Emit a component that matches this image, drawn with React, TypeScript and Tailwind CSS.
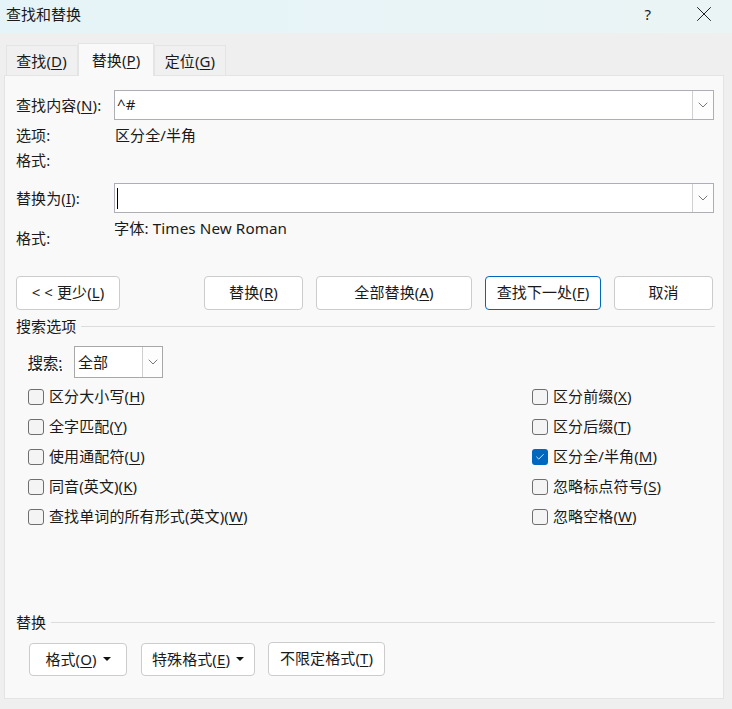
import React from "react";
import { Check, ChevronDown, X } from "lucide-react";

const font = "font-['Noto_Sans','Noto_Sans_CJK_SC',sans-serif]";

function Key({ k }: { k: string }) {
  return (
    <>
      (<span className="underline underline-offset-2">{k}</span>)
    </>
  );
}

function DropBtn({ w }: { w: string }) {
  return (
    <div className={`flex ${w} items-center justify-center border-l border-[#cfcfcf] bg-[#fdfdfd]`}>
      <ChevronDown className="h-4 w-4 text-[#555]" strokeWidth={1.2} />
    </div>
  );
}

function Combo({ children }: { children?: React.ReactNode }) {
  return (
    <div className="flex h-[30px] w-[600px] items-stretch border-[1.5px] border-[#aeaeb6] bg-white">
      <div className="flex flex-1 items-center pl-[1px]">{children}</div>
      <DropBtn w="w-[21px]" />
    </div>
  );
}

function Btn({ w, focus, tall, children }: { w: string; focus?: boolean; tall?: boolean; children: React.ReactNode }) {
  return (
    <div
      className={`flex items-center justify-center rounded-[4px] border bg-white pb-[2px] ${w} ${tall ? "h-[34px]" : "h-[33px]"} ${
        focus ? "border-[#0067c0]" : "border-[#cccccc]"
      }`}
    >
      {children}
    </div>
  );
}

function Caret() {
  return <span className="ml-[6px] inline-block border-x-[4px] border-t-[4px] border-x-transparent border-t-[#111]" />;
}

function Opt({ label, k, checked }: { label: string; k: string; checked?: boolean }) {
  return (
    <div className="flex h-[30px] items-center">
      {checked ? (
        <span className="mr-[5px] flex h-4 w-4 items-center justify-center rounded-[3px] bg-[#0067c0]">
          <Check className="h-[10px] w-[10px] text-white" strokeWidth={2} />
        </span>
      ) : (
        <span className="mr-[5px] h-4 w-4 rounded-[3px] border border-[#6f6f6f] bg-[#f4f4f4]" />
      )}
      <span className="mb-[2px]">
        {label}
        <Key k={k} />
      </span>
    </div>
  );
}

function Section({ title, className }: { title: string; className: string }) {
  return (
    <div className={`flex h-[20px] items-center ${className}`}>
      <span className="mr-[5px] mb-[1px]">{title}</span>
      <div className="h-px flex-1 bg-[#dcdcdc]" />
    </div>
  );
}

export default function App() {
  return (
    <div className={`flex h-[709px] w-[732px] flex-col overflow-hidden bg-[#efefef] text-[15px] leading-[20px] tracking-[0.1px] text-[#1a1a1a] ${font}`}>
      {/* title bar */}
      <div className="flex h-[33px] items-center justify-between bg-gradient-to-r from-[#e5f4f8] to-[#ebf4f5] pl-[6px]">
        <span className="mb-[6px] text-[15px] tracking-normal">查找和替换</span>
        <div className="mb-[5px] flex items-center">
          <span className="mr-[40px] text-[15px]">?</span>
          <X className="mr-[15px] h-[26px] w-[26px]" strokeWidth={0.9} />
        </div>
      </div>

      {/* tabs */}
      <div className="flex h-[42px] items-end pl-[6px]">
        <div className="flex h-[30px] w-[72px] items-center justify-center border border-b-0 border-[#e4e4e4] bg-[#f0f0f0] pr-[1px]">
          <span>查找<Key k="D" /></span>
        </div>
        <div className="relative top-px z-10 flex h-[33px] w-[76px] items-center justify-center border border-b-0 border-[#e4e4e4] bg-[#f9f9f9]">
          <span>替换<Key k="P" /></span>
        </div>
        <div className="flex h-[30px] w-[72px] items-center justify-center border border-b-0 border-[#e4e4e4] bg-[#f0f0f0]">
          <span>定位<Key k="G" /></span>
        </div>
      </div>

      {/* panel */}
      <div className="ml-[4px] flex h-[624px] w-[720px] flex-col border border-[#e4e4e4] bg-[#f9f9f9] pl-[11px]">
        <div className="mt-[14px] flex">
          <div className="flex w-[98px] items-center">查找内容<Key k="N" />:</div>
          <Combo>
            <span className="ml-[1px] mb-[2px] text-[15px]">^#</span>
          </Combo>
        </div>
        <div className="mt-[5px] flex h-[20px]">
          <div className="w-[99px]">选项:</div>
          <div>区分全/半角</div>
        </div>
        <div className="mt-[5px] h-[20px]">格式:</div>

        <div className="mt-[13px] flex">
          <div className="flex w-[98px] items-center">替换为<Key k="I" />:</div>
          <Combo>
            <span className="ml-[1px] h-[21px] w-px bg-black" />
          </Combo>
        </div>
        <div className="flex h-[40px]">
          <div className="mt-[15px] w-[98px]">格式:</div>
          <div className="mt-[5px] text-[15.2px]">字体: Times New Roman</div>
        </div>

        <div className="mt-[23px] flex h-[34px]">
          <Btn w="w-[104px]" tall>
            <span>&lt; &lt; 更少<Key k="L" /></span>
          </Btn>
          <div className="ml-[84px] flex gap-[13px]">
            <Btn w="w-[99px]" tall>
              <span>替换<Key k="R" /></span>
            </Btn>
            <Btn w="w-[156px]" tall>
              <span>全部替换<Key k="A" /></span>
            </Btn>
            <Btn w="w-[116px]" tall focus>
              <span>查找下一处<Key k="F" /></span>
            </Btn>
            <Btn w="w-[99px]" tall>
              <span>取消</span>
            </Btn>
          </div>
        </div>

        <Section title="搜索选项" className="mt-[6px] mr-[8px]" />

        <div className="ml-[12px] mt-[10px] flex items-center">
          <span className="w-[46px]">
            <span className="underline decoration-dotted underline-offset-2">搜索:</span>
          </span>
          <div className="flex h-[32px] w-[89px] items-stretch border border-[#a8a8a8] bg-white">
            <div className="flex flex-1 items-center pl-[3px]">全部</div>
            <DropBtn w="w-[20px]" />
          </div>
        </div>

        <div className="ml-[12px] mt-[4px] flex">
          <div className="w-[504px]">
            <Opt label="区分大小写" k="H" />
            <Opt label="全字匹配" k="Y" />
            <Opt label="使用通配符" k="U" />
            <Opt label="同音(英文)" k="K" />
            <Opt label="查找单词的所有形式(英文)" k="W" />
          </div>
          <div>
            <Opt label="区分前缀" k="X" />
            <Opt label="区分后缀" k="T" />
            <Opt label="区分全/半角" k="M" checked />
            <Opt label="忽略标点符号" k="S" />
            <Opt label="忽略空格" k="W" />
          </div>
        </div>

        <Section title="替换" className="mt-[80px] mr-[8px]" />

        <div className="ml-[13px] mt-[10px] flex items-start">
          <div className="mt-px">
            <Btn w="w-[98px]">
              <span>格式<Key k="O" /></span>
              <Caret />
            </Btn>
          </div>
          <div className="ml-[14px] mt-px">
            <Btn w="w-[114px]">
              <span>特殊格式<Key k="E" /></span>
              <Caret />
            </Btn>
          </div>
          <div className="ml-[13px]">
            <Btn w="w-[117px]" tall>
              <span>不限定格式<Key k="T" /></span>
            </Btn>
          </div>
        </div>
      </div>
    </div>
  );
}
